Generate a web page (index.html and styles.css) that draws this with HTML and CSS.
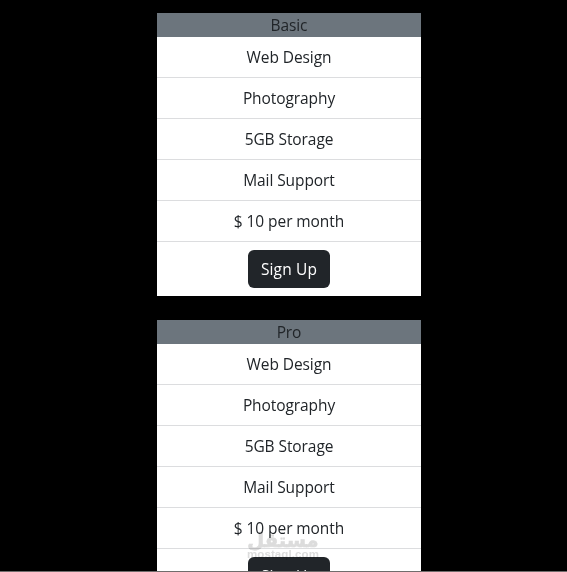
FILE: index.html
```html
<!DOCTYPE html>
<html lang="en">
<head>
  <meta charset="UTF-8">
  <meta name="viewport" content="width=device-width, initial-scale=1.0">
  <title>Pricing</title>
  <link rel="stylesheet" href="styles.css">
</head>
<body>
  <div class="pricing">
    <ul class="plan">
      <li class="plan-title">Basic</li>
      <li>Web Design</li>
      <li>Photography</li>
      <li>5GB Storage</li>
      <li>Mail Support</li>
      <li>$ 10 per month</li>
      <li class="plan-action"><button class="btn">Sign Up</button></li>
    </ul>
    <ul class="plan">
      <li class="plan-title">Pro</li>
      <li>Web Design</li>
      <li>Photography</li>
      <li>5GB Storage</li>
      <li>Mail Support</li>
      <li>$ 10 per month</li>
      <li class="plan-action"><button class="btn">Sign Up</button></li>
    </ul>
  </div>

  <div class="watermark">
    <span class="watermark-ar" lang="ar" dir="rtl">مستقل</span>
    <span class="watermark-url">mostaql.com</span>
  </div>
</body>
</html>
```

FILE: styles.css
```css
* {
  box-sizing: border-box;
}
body {
  margin: 0;
  height: 572px;
  overflow: hidden;
  background: #000;
  color: #212529;
  font-family: "Segoe UI", "Open Sans", sans-serif;
  font-size: 15.5px;
  line-height: 24px;
  letter-spacing: -0.08px;
  border-bottom: 1px solid #706c6c;
}
.pricing {
  display: flex;
  flex-direction: column;
  gap: 24px;
  width: 264px;
  height: 571px;
  margin-left: 157px;
  padding-top: 13px;
  overflow: hidden;
}
.plan {
  flex-shrink: 0;
  margin: 0;
  padding: 0;
  list-style: none;
  text-align: center;
  background: #fff;
}
.plan li {
  padding: 8px 16px;
  border-bottom: 1px solid #dcdddf;
}
.plan .plan-title {
  padding: 0;
  border: 0;
  background: #6c757d;
}
.plan .plan-action {
  display: flex;
  justify-content: center;
  border: 0;
}
.btn {
  width: 82px;
  height: 38px;
  padding: 0;
  border: 0;
  border-radius: 6px;
  background: #212529;
  color: #fff;
  font: inherit;
  letter-spacing: 0.15px;
}
.watermark {
  position: absolute;
  left: 248px;
  top: 531px;
  width: 70px;
  height: 34px;
  color: #dcdcdc;
  mix-blend-mode: multiply;
  white-space: nowrap;
}
.watermark span {
  display: flex;
  justify-content: center;
}
.watermark-ar {
  font: bold 19.5px/19px "DejaVu Sans", sans-serif;
  letter-spacing: 0;
  -webkit-text-stroke: 0.6px #dcdcdc;
}
.watermark-url {
  font: bold 11.5px/9px "Liberation Sans", sans-serif;
  letter-spacing: 0.1px;
}
```
